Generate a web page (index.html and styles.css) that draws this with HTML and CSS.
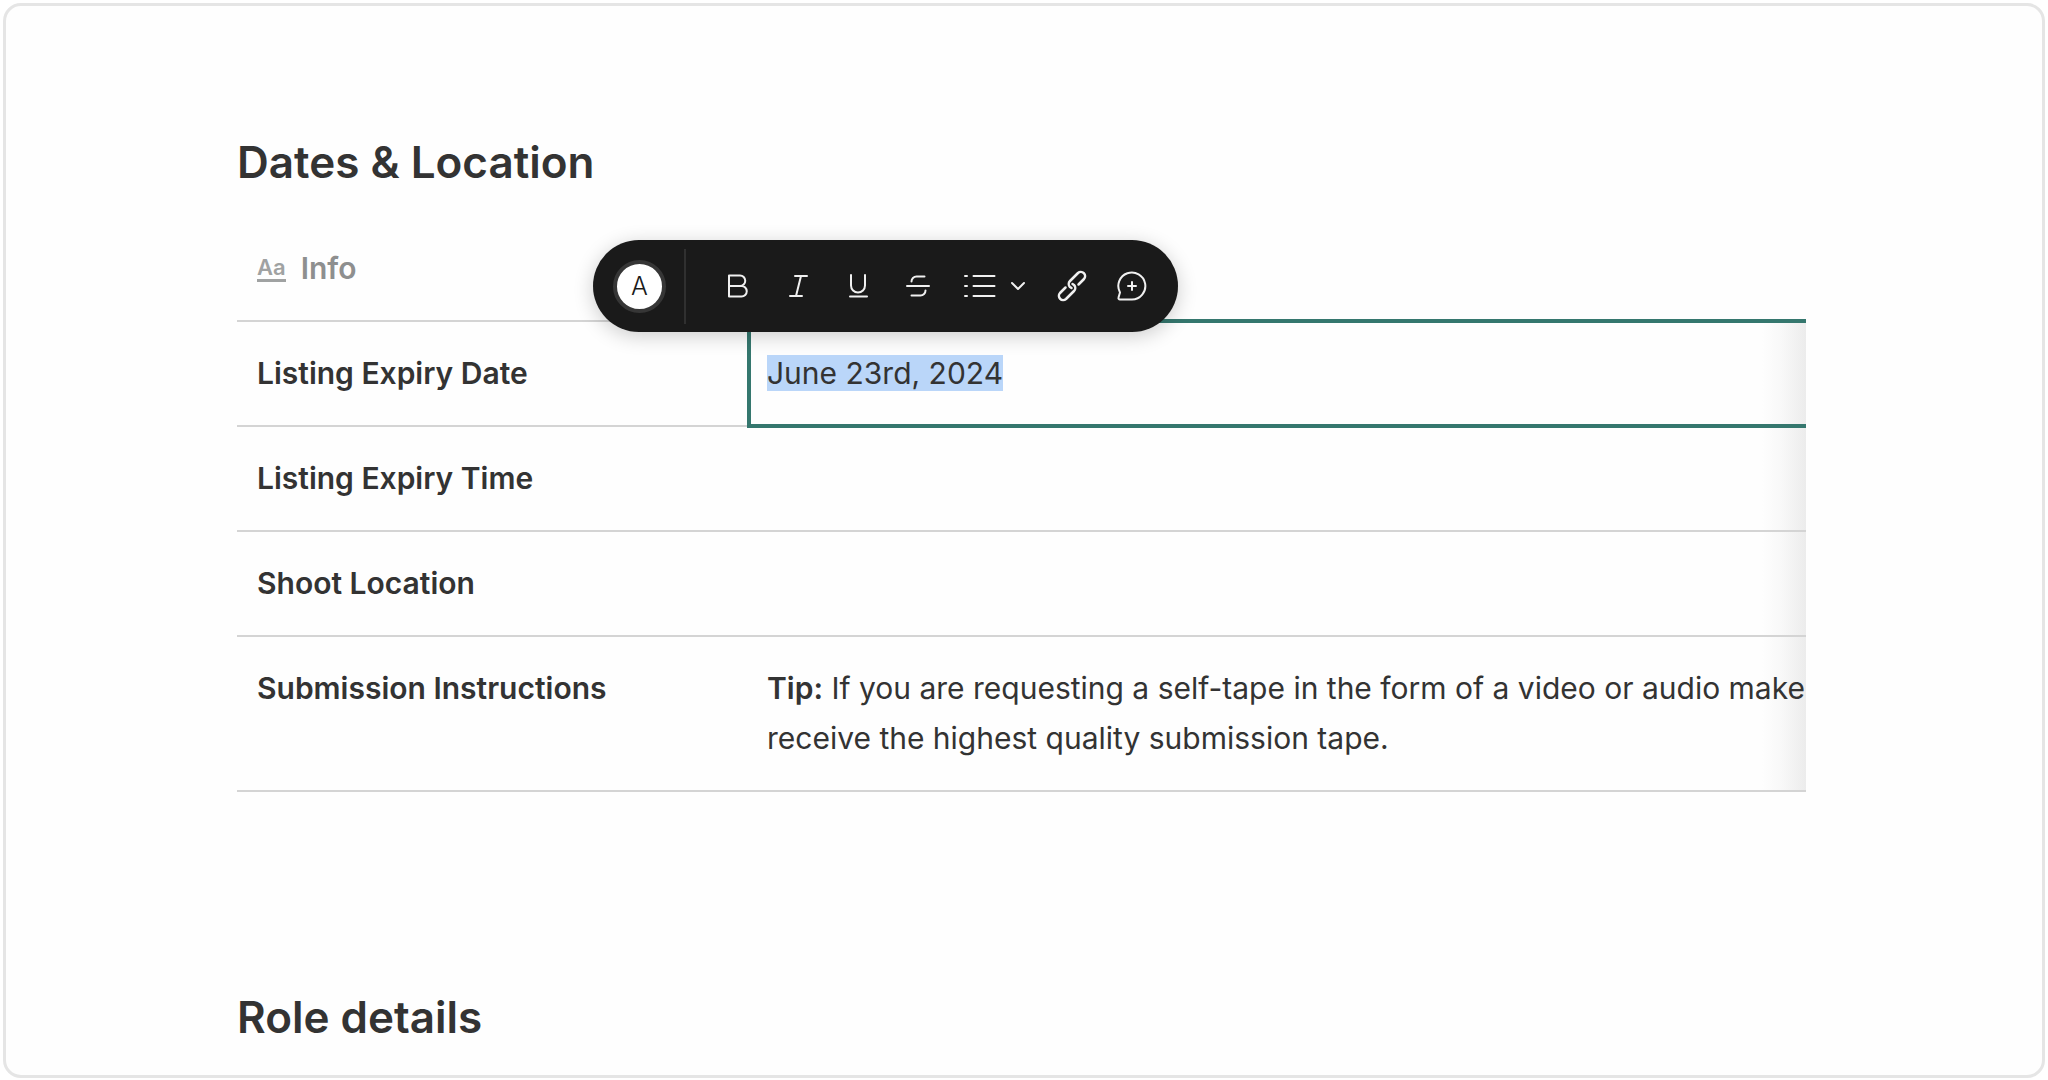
FILE: index.html
```html
<!DOCTYPE html>
<html lang="en">
<head>
    <meta charset="UTF-8">
    <meta name="viewport" content="width=device-width, initial-scale=1.0">
    <title>Dates &amp; Location</title>
    <link rel="stylesheet" href="styles.css">
</head>
<body>
    <main class="page">
        <h2>Dates &amp; Location</h2>
        <div class="table-area">
            <div class="table-scroll">
                <table class="info-table">
                    <thead>
                        <tr>
                            <th class="label-col" scope="col">
                                <span class="head-label"><span class="type-icon">Aa</span>Info</span>
                            </th>
                            <th></th>
                        </tr>
                    </thead>
                    <tbody>
                        <tr>
                            <th scope="row">Listing Expiry Date</th>
                            <td class="selected"><mark>June 23rd, 2024</mark></td>
                        </tr>
                        <tr>
                            <th scope="row">Listing Expiry Time</th>
                            <td></td>
                        </tr>
                        <tr>
                            <th scope="row">Shoot Location</th>
                            <td></td>
                        </tr>
                        <tr>
                            <th scope="row">Submission Instructions</th>
                            <td><b>Tip:</b> If you are requesting a self-tape in the form of a video or audio make<br>receive the highest quality submission tape.</td>
                        </tr>
                    </tbody>
                </table>
            </div>

            <div class="toolbar" role="toolbar" aria-label="Text formatting">
                <button class="color-btn" type="button" aria-label="Text color">A</button>
                <span class="divider"></span>
                <button class="tool" type="button" aria-label="Bold">
                    <svg width="32" height="32" viewBox="0 0 32 32"><path d="M7 5.500h11a5.250 5.250 0 0 1 0 10.500H7zM7 16h12.500a5.250 5.250 0 0 1 0 10.500H7z"/></svg>
                </button>
                <button class="tool" type="button" aria-label="Italic">
                    <svg width="32" height="32" viewBox="0 0 32 32"><path d="M13 6h12M8 26h12M19 6l-5 20"/></svg>
                </button>
                <button class="tool" type="button" aria-label="Underline">
                    <svg width="32" height="32" viewBox="0 0 32 32"><path d="M9 5v10.500a7 7 0 0 0 14 0V5M8 26.500h17"/></svg>
                </button>
                <button class="tool" type="button" aria-label="Strikethrough">
                    <svg width="32" height="32" viewBox="0 0 32 32"><path d="M22.500 6.500h-8a5 5 0 0 0-5 5M5 16h22M9.500 25.500h9a5 5 0 0 0 5-5"/></svg>
                </button>
                <button class="tool tool-list" type="button" aria-label="List style">
                    <svg width="32" height="32" viewBox="0 0 32 32"><path d="M1 6h2M1 16h2M1 26h2M9.500 6h21M9.500 16h21M9.500 26h21"/></svg>
                    <svg width="16" height="16" viewBox="0 0 16 16"><path d="M2 5l6 6 6-6"/></svg>
                </button>
                <button class="tool" type="button" aria-label="Link">
                    <svg width="32" height="32" viewBox="0 0 32 32"><path stroke-width="2.500" d="M22.500 14.500l5.500-5.500a4.250 4.250 0 0 0-6-6l-8 8a4.250 4.250 0 0 0 0 6l1.500 1M9.500 17.500L4 23a4.250 4.250 0 0 0 6 6l8-8a4.250 4.250 0 0 0 0-6l-1.500-1"/></svg>
                </button>
                <button class="tool" type="button" aria-label="Comment">
                    <svg width="32" height="32" viewBox="0 0 32 32"><path d="M4 22.500A13.500 13.500 0 1 1 16 29.500H4a1.500 1.500 0 0 1-1.500-2zM16 12v8M12 16h8"/></svg>
                </button>
            </div>
        </div>
        <h2>Role details</h2>
    </main>
</body>
</html>
```

FILE: styles.css
```css
* {
    box-sizing: border-box;
}

body {
    margin: 0;
    padding: 3px;
    background-color: #fff;
    font-family: Inter, Arial, sans-serif;
    font-size: 30px;
    line-height: 50px;
    color: #333;
}

.page {
    min-height: calc(100vh - 6px);
    padding: 128px 236px 30px 231px;
    border: 3px solid #e5e5e5;
    border-radius: 18px;
    background-color: #fefefe;
}

h2 {
    margin: 0;
    font-size: 44px;
    line-height: 56px;
    font-weight: 600;
}

.table-area {
    position: relative;
    margin: 27px 0 197px;
}

.table-scroll {
    overflow: hidden;
}

.info-table {
    width: 100%;
    border-collapse: separate;
    border-spacing: 0;
    table-layout: fixed;
}

.info-table th,
.info-table td {
    height: 105px;
    padding: 26px 0 27px 20px;
    border-bottom: 2px solid #d4d4d4;
    text-align: left;
    vertical-align: top;
    white-space: nowrap;
}

.info-table th,
.info-table b {
    font-weight: 600;
}

.info-table .label-col {
    width: 510px;
}

.info-table td {
    background: linear-gradient(to left, #ececec, #f8f8f8 24px, #fefefe 44px);
}

.head-label {
    display: flex;
    align-items: center;
    gap: 15px;
    color: #8e8f8f;
}

.type-icon {
    border-bottom: 3px solid #a0a2a2;
    font-size: 22px;
    line-height: 24px;
    color: #a0a2a2;
}

.info-table .selected {
    position: relative;
}

.selected::after {
    content: "";
    position: absolute;
    inset: -3px 0;
    border: 4px solid #35776e;
    border-right: none;
    pointer-events: none;
}

mark {
    background-color: #bad6f9;
    color: inherit;
}

.toolbar {
    position: absolute;
    top: 23px;
    left: 356px;
    z-index: 1;
    display: flex;
    align-items: center;
    height: 92px;
    padding: 0 16px 0 20px;
    border-radius: 46px;
    background-color: #1a1a1a;
    box-shadow: 0 4px 20px rgba(0, 0, 0, 0.2);
}

.toolbar button {
    padding: 0;
    border: none;
    cursor: pointer;
}

.toolbar .color-btn {
    width: 53px;
    height: 53px;
    border: 4px solid #363636;
    border-radius: 50%;
    background-color: #fff;
    font-family: inherit;
    font-size: 25px;
    font-weight: 300;
    color: #1a1a1a;
}

.divider {
    width: 2px;
    height: 75px;
    margin: 0 22px 0 18px;
    background-color: #303030;
}

.tool {
    display: flex;
    align-items: center;
    justify-content: center;
    width: 60px;
    height: 60px;
    background: none;
}

.toolbar .tool-list {
    gap: 14px;
    width: 94px;
}

.tool svg {
    fill: none;
    stroke: #f0f0f0;
    stroke-width: 2;
    stroke-linecap: round;
    stroke-linejoin: round;
}
```
